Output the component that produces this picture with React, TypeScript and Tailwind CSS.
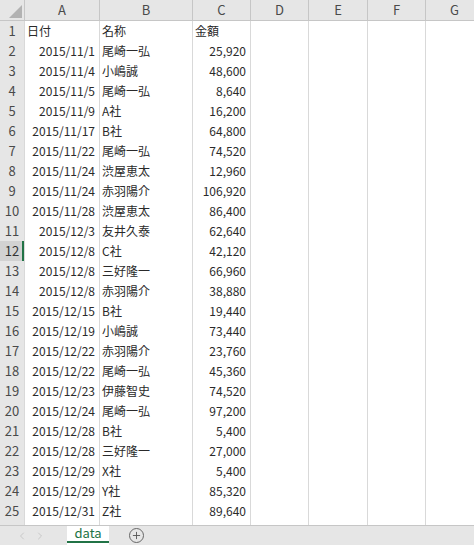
import { ChevronLeft, ChevronRight, Plus } from "lucide-react";

const ROWS: [string, string, string][] = [
  ["日付", "名称", "金額"],
  ["2015/11/1", "尾崎一弘", "25,920"],
  ["2015/11/4", "小嶋誠", "48,600"],
  ["2015/11/5", "尾崎一弘", "8,640"],
  ["2015/11/9", "A社", "16,200"],
  ["2015/11/17", "B社", "64,800"],
  ["2015/11/22", "尾崎一弘", "74,520"],
  ["2015/11/24", "渋屋恵太", "12,960"],
  ["2015/11/24", "赤羽陽介", "106,920"],
  ["2015/11/28", "渋屋恵太", "86,400"],
  ["2015/12/3", "友井久泰", "62,640"],
  ["2015/12/8", "C社", "42,120"],
  ["2015/12/8", "三好隆一", "66,960"],
  ["2015/12/8", "赤羽陽介", "38,880"],
  ["2015/12/15", "B社", "19,440"],
  ["2015/12/19", "小嶋誠", "73,440"],
  ["2015/12/22", "赤羽陽介", "23,760"],
  ["2015/12/22", "尾崎一弘", "45,360"],
  ["2015/12/23", "伊藤智史", "74,520"],
  ["2015/12/24", "尾崎一弘", "97,200"],
  ["2015/12/28", "B社", "5,400"],
  ["2015/12/28", "三好隆一", "27,000"],
  ["2015/12/29", "X社", "5,400"],
  ["2015/12/29", "Y社", "85,320"],
  ["2015/12/31", "Z社", "89,640"],
];

const COLS = ["A", "B", "C", "D", "E", "F", "G"];
// 1px gaps on a grey row background draw the gridlines
const cols = "grid grid-cols-[24px_74px_92px_57px_57px_58px_57px_57px] gap-x-px";

export default function App() {
  return (
    <div className="flex h-[545px] w-[474px] flex-col overflow-hidden bg-white font-['Noto_Sans_CJK_JP','Liberation_Sans',sans-serif] text-[12px] text-[#2a2a2a]">
      {/* column headers */}
      <div className={`${cols} h-[23px] bg-[#c6c6c6] pr-px pb-px`}>
        <div className="flex items-end justify-end bg-[#e6e6e6] pr-[2px] pb-[2px]">
          <div className="h-0 w-0 border-b-[13px] border-l-[13px] border-solid border-b-[#b2b2b2] border-l-transparent" />
        </div>
        {COLS.map((c) => (
          <div key={c} className="flex items-center justify-center bg-[#e6e6e6] text-[13px] text-[#4a4a4a]">
            {c}
          </div>
        ))}
      </div>

      {ROWS.map(([d, n, v], i) => {
        const sel = i === 11;
        return (
          <div key={i} className={`${cols} h-[20px] bg-[#d9d9d9] pb-px`}>
            <div
              className={`flex items-center justify-center text-[13px] ${
                sel ? "bg-[#d2d2d2] text-[#333] shadow-[inset_-2px_0_0_#217346]" : "bg-[#e6e6e6] text-[#4a4a4a]"
              }`}
            >
              {i + 1}
            </div>
            <div className={`flex items-center bg-white ${i === 0 ? "justify-start pl-[2px]" : "justify-end pr-[4px]"}`}>
              {d}
            </div>
            <div className="flex items-center bg-white pl-[2px]">{n}</div>
            <div className={`flex items-center bg-white ${i === 0 ? "justify-start pl-[2px]" : "justify-end pr-[4px]"}`}>
              {v}
            </div>
            <div className="bg-white" />
            <div className="bg-white" />
            <div className="bg-white" />
            <div className="bg-white" />
          </div>
        );
      })}

      {/* partial row 26 */}
      <div className={`${cols} h-[4px] bg-[#d9d9d9]`}>
        <div className="bg-[#e6e6e6]" />
        {COLS.map((c) => (
          <div key={c} className="bg-white" />
        ))}
      </div>

      {/* sheet tabs */}
      <div className="flex flex-1 items-stretch border-t border-[#c6c6c6] bg-[#e6e6e6]">
        <div className="flex w-[60px] items-center gap-[6px] pl-[16px] text-[#bdbdbd]">
          <ChevronLeft className="h-[12px] w-[12px]" strokeWidth={1.5} />
          <ChevronRight className="h-[12px] w-[12px]" strokeWidth={1.5} />
        </div>
        <div className="ml-[7px] flex w-[42px] flex-col items-center bg-white">
          <span className="mt-[-1px] text-[13px] leading-[16px] text-[#217346]">data</span>
          <div className="mt-auto mb-[2px] h-[2px] w-full bg-[#217346]" />
        </div>
        <div className="ml-[20px] flex items-center">
          <div className="flex h-[15px] w-[15px] items-center justify-center rounded-full border border-[#666]">
            <Plus className="h-[11px] w-[11px] text-[#555]" strokeWidth={2} />
          </div>
        </div>
      </div>
    </div>
  );
}
